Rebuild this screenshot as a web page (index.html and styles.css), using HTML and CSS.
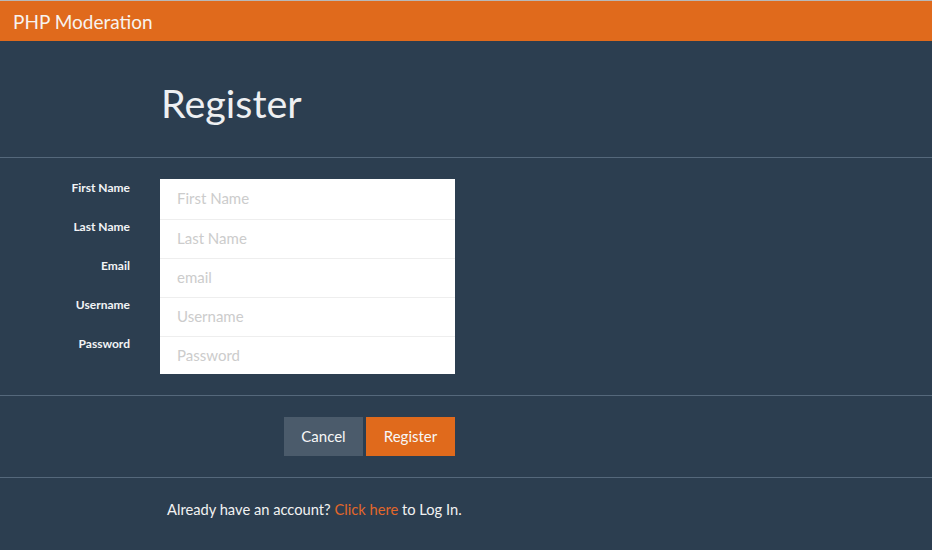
FILE: index.html
```html
<!DOCTYPE html>
<html>
<head>
<meta charset="utf-8">
<link rel="stylesheet" href="styles.css">
</head>
<body>
<header class="topbar"><span class="brand">PHP Moderation</span></header>
<main class="page">
  <section class="title-row">
    <h1 class="title">Register</h1>
  </section>
  <hr class="rule">
  <form class="form">
    <div class="labels">
      <label class="lbl">First Name</label>
      <label class="lbl">Last Name</label>
      <label class="lbl">Email</label>
      <label class="lbl">Username</label>
      <label class="lbl">Password</label>
    </div>
    <div class="fields">
      <input class="field" type="text" placeholder="First Name">
      <input class="field" type="text" placeholder="Last Name">
      <input class="field" type="text" placeholder="email">
      <input class="field" type="text" placeholder="Username">
      <input class="field" type="password" placeholder="Password">
    </div>
  </form>
  <hr class="rule">
  <div class="actions">
    <button class="btn btn-cancel" type="button">Cancel</button>
    <button class="btn btn-primary" type="button">Register</button>
  </div>
  <hr class="rule">
  <p class="footnote">Already have an account? <a class="link" href="#">Click here</a> to Log In.</p>
</main>
</body>
</html>
```
FILE: styles.css
```css
html, body {
  margin: 0;
  padding: 0;
}
body {
  background: #2c3e50;
  font-family: Lato, "Open Sans", sans-serif;
  color: #f2f2f2;
  height: 550px;
  overflow: hidden;
}
.topbar {
  border-top: 1px solid #b8b8b8;
  background: #e06a1c;
  height: 40px;
  display: flex;
  align-items: center;
  padding-left: 13px;
}
.brand {
  font-size: 19px;
  color: #f7f3ef;
  line-height: 1;
}
.title-row {
  height: 116px;
  display: flex;
  align-items: center;
  padding-left: 161px;
}
.title {
  margin: 0;
  font-weight: 400;
  font-size: 39.5px;
  line-height: 1;
  color: #eef0f2;
  position: relative;
  top: 4px;
}
.rule {
  margin: 0;
  border: 0;
  height: 1px;
  background: #55687b;
}
.form {
  display: flex;
  padding: 21px 0;
}
.labels {
  width: 130px;
  padding-right: 30px;
  display: flex;
  flex-direction: column;
  align-items: flex-end;
}
.lbl {
  height: 39px;
  font-size: 12px;
  font-weight: 700;
  line-height: 17px;
  color: #f2f4f6;
}
.fields {
  width: 295px;
  height: 195px;
  background: #fff;
  display: flex;
  flex-direction: column;
}
.field {
  box-sizing: border-box;
  height: 39px;
  border: 0;
  border-top: 1px solid #eeeeee;
  padding: 0 17px 2px;
  font-family: Lato, sans-serif;
  font-size: 15px;
  color: #333;
  background: #fff;
  outline: none;
}
.field:first-child {
  border-top: 0;
  height: 40px;
}
.field:last-child {
  height: 38px;
}
.field::placeholder {
  color: #cccccc;
}
.actions {
  display: flex;
  gap: 3px;
  padding: 21px 0 21px 284px;
}
.btn {
  height: 39px;
  border: 0;
  font-family: Lato, sans-serif;
  font-size: 15px;
  color: #f7f7f7;
  padding: 0 0 2px;
}
.btn-cancel {
  width: 79px;
  background: #4b5b6b;
}
.btn-primary {
  width: 89px;
  background: #e06a1c;
}
.footnote {
  margin: 0;
  padding: 22px 0 0 167px;
  font-size: 14.7px;
  line-height: 18px;
  color: #f2f2f2;
}
.link {
  color: #e3672a;
  text-decoration: none;
}
```
